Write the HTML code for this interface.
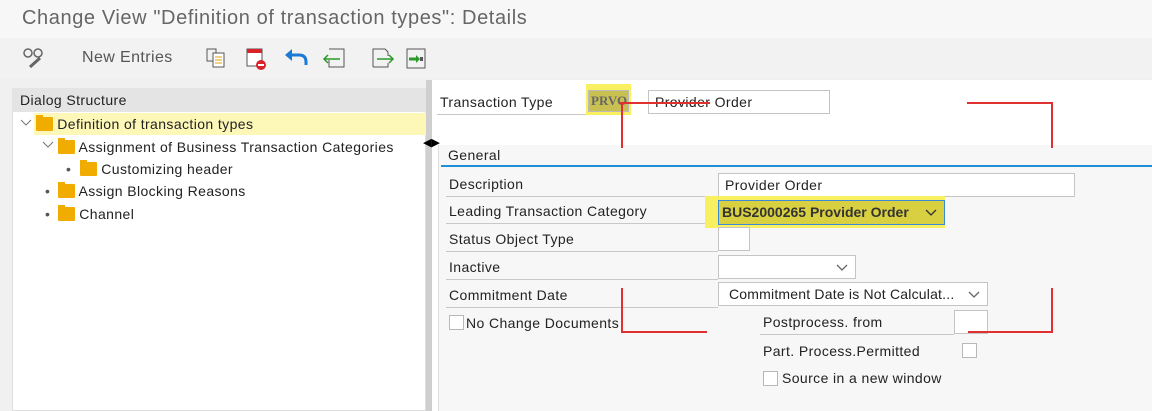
<!DOCTYPE html>
<html><head><style>
*{margin:0;padding:0;box-sizing:border-box}
body{width:1152px;height:411px;position:relative;overflow:hidden;background:#fff;font-family:"Liberation Sans",sans-serif;font-size:14px;color:#222;letter-spacing:0.4px}
.a{position:absolute;white-space:nowrap}
.lbl{position:absolute;border-bottom:1px solid #c8c8c8;height:24px;line-height:22px;padding-left:3px;font-size:14px}
.inp{position:absolute;background:#fff;border:1px solid #c4c4c4;height:24px;line-height:22px;padding-left:6px;font-size:14px}
.cb{position:absolute;width:15px;height:15px;border:1px solid #b8b8b8;background:#fff}
.rl{position:absolute;background:#e03030}
.fold{display:inline-block;width:17px;height:14px;background:#f0ac00;border-radius:1px;vertical-align:-2px;position:relative}
.fold:before{content:"";position:absolute;left:0;top:-2px;width:7px;height:3px;background:#f0ac00}
.chev{position:absolute;right:7px;top:8px;width:12px;height:8px}
</style></head><body>
<div class="a" style="left:0;top:0;width:1152px;height:38px;background:#f7f7f7"></div>
<div class="a" style="left:22px;top:7px;font-size:20px;color:#666;letter-spacing:0.6px">Change View "Definition of transaction types": Details</div>
<div class="a" style="left:0;top:38px;width:1152px;height:40px;background:#f2f2f2"></div>
<svg class="a" style="left:22px;top:45px" width="26" height="26"><circle cx="6" cy="8" r="4" fill="none" stroke="#666" stroke-width="1.5"/><circle cx="16" cy="8" r="4" fill="none" stroke="#666" stroke-width="1.5"/><path d="M8 22 L18 13" stroke="#666" stroke-width="3"/></svg>
<div class="a" style="left:82px;top:49px;font-size:16px;color:#555">New Entries</div>
<svg class="a" style="left:205px;top:46px" width="225" height="26">
<rect x="2" y="3" width="9" height="12" fill="none" stroke="#555"/><rect x="8" y="7" width="11" height="14" fill="#fff" stroke="#555"/><line x1="10" y1="11" x2="17" y2="11" stroke="#e0a000"/><line x1="10" y1="14" x2="17" y2="14" stroke="#e0a000"/><line x1="10" y1="17" x2="17" y2="17" stroke="#e0a000"/>
<rect x="42" y="3" width="15" height="17" fill="#fff" stroke="#555"/><rect x="42" y="3" width="15" height="4" fill="#d8232a"/><circle cx="56" cy="19" r="5" fill="#d8232a"/><line x1="53" y1="19" x2="59" y2="19" stroke="#fff" stroke-width="2"/>
<path d="M85 9 L94 9 Q101 9 101 16 L101 19" fill="none" stroke="#1a7ad4" stroke-width="3"/><path d="M80 9 L87 3 L87 15 Z" fill="#1a7ad4"/>
<path d="M124 3 L139 3 L139 21 L124 21 L124 14" fill="none" stroke="#555"/><path d="M135 13 L119 13 M123 9 L119 13 L123 17" fill="none" stroke="#2a9a2a" stroke-width="1.5"/>
<path d="M168 21 L168 3 L180 3 L183 6 L183 10 M183 17 L183 21 L168 21" fill="none" stroke="#555"/><path d="M172 13 L188 13 M184 9 L188 13 L184 17" fill="none" stroke="#2a9a2a" stroke-width="1.5"/>
<rect x="202" y="3" width="18" height="19" fill="none" stroke="#555"/><path d="M204 13 L212 13" stroke="#2a9a2a" stroke-width="3"/><path d="M211 9 L215 13 L211 17Z" fill="#2a9a2a"/><rect x="215" y="11" width="3" height="4" fill="#555"/>
</svg>
<div class="a" style="left:0;top:78px;width:1152px;height:333px;background:#f0f0f0"></div>
<div class="a" style="left:12px;top:88px;width:414px;height:323px;background:#fff;border:1px solid #ddd"></div>
<div class="a" style="left:12px;top:88px;width:414px;height:24px;background:#e4e4e4"></div>
<div class="a" style="left:20px;top:92px;font-size:14px">Dialog Structure</div>
<div class="a" style="left:426px;top:80px;width:6px;height:331px;background:#cfcfcf"></div>
<div class="a" style="left:34px;top:113px;width:392px;height:22px;background:#fdf7b8"></div>
<svg class="a" style="left:20px;top:119px" width="12" height="8"><path d="M1 1 L6 6 L11 1" fill="none" stroke="#777"/></svg>
<div class="a" style="left:36px;top:116px"><span class="fold"></span> Definition of transaction types</div>
<svg class="a" style="left:42px;top:141px" width="12" height="8"><path d="M1 1 L6 6 L11 1" fill="none" stroke="#777"/></svg>
<div class="a" style="left:58px;top:139px"><span class="fold"></span> Assignment of Business Transaction Categories</div>
<div class="a" style="left:66px;top:161px;color:#555">&#8226;</div>
<div class="a" style="left:80px;top:161px"><span class="fold"></span> Customizing header</div>
<div class="a" style="left:45px;top:183px;color:#555">&#8226;</div>
<div class="a" style="left:58px;top:183px"><span class="fold"></span> Assign Blocking Reasons</div>
<div class="a" style="left:45px;top:206px;color:#555">&#8226;</div>
<div class="a" style="left:58px;top:206px"><span class="fold"></span> Channel</div>
<div class="a" style="left:432px;top:80px;width:720px;height:331px;background:#fff"></div>
<div class="lbl" style="left:437px;top:91px;width:150px">Transaction Type</div>
<div class="a" style="left:586px;top:84px;width:45px;height:31px;background:#f8f060"></div>
<div class="a" style="left:588px;top:90px;width:41px;height:22px;background:#c8c050;border:1px solid #bbb;font-family:'Liberation Serif',serif;font-weight:bold;font-size:13px;line-height:20px;color:#666;padding-left:2px;letter-spacing:0">PRVO</div>
<div class="inp" style="left:648px;top:90px;width:182px">Provider Order</div>
<div class="a" style="left:438px;top:145px;width:714px;height:266px;background:#f7f7f7;border-left:1px solid #ddd"></div>
<div class="a" style="left:448px;top:147px;font-size:14px">General</div>
<div class="a" style="left:441px;top:165px;width:711px;height:2px;background:#1e90d8"></div>
<div class="lbl" style="left:446px;top:173px;width:272px">Description</div>
<div class="inp" style="left:718px;top:173px;width:357px">Provider Order</div>
<div class="lbl" style="left:446px;top:200px;width:272px">Leading Transaction Category</div>
<div class="a" style="left:705px;top:196px;width:240px;height:32px;background:#f8f060"></div>
<div class="a" style="left:718px;top:200px;width:227px;height:25px;background:#d8d040;border:1px solid #3a8ad8;font-weight:bold;line-height:22px;padding-left:3px;color:#333;letter-spacing:0">BUS2000265 Provider Order <svg class="chev" viewBox="0 0 12 8"><path d="M1 1 L6 6 L11 1" fill="none" stroke="#333" stroke-width="1.3"/></svg></div>
<div class="lbl" style="left:446px;top:228px;width:272px">Status Object Type</div>
<div class="inp" style="left:718px;top:227px;width:32px"></div>
<div class="lbl" style="left:446px;top:256px;width:272px">Inactive</div>
<div class="inp" style="left:718px;top:255px;width:138px"><svg class="chev" viewBox="0 0 12 8"><path d="M1 1 L6 6 L11 1" fill="none" stroke="#666" stroke-width="1.3"/></svg></div>
<div class="lbl" style="left:446px;top:284px;width:272px">Commitment Date</div>
<div class="inp" style="left:718px;top:282px;width:270px;padding-left:10px;letter-spacing:0.2px">Commitment Date is Not Calculat... <svg class="chev" viewBox="0 0 12 8"><path d="M1 1 L6 6 L11 1" fill="none" stroke="#666" stroke-width="1.3"/></svg></div>
<div class="cb" style="left:449px;top:315px"></div>
<div class="a" style="left:466px;top:315px">No Change Documents</div>
<div class="lbl" style="left:760px;top:311px;width:194px">Postprocess. from</div>
<div class="inp" style="left:954px;top:310px;width:34px"></div>
<div class="a" style="left:763px;top:343px">Part. Process.Permitted</div>
<div class="cb" style="left:962px;top:343px"></div>
<div class="cb" style="left:763px;top:371px"></div>
<div class="a" style="left:782px;top:370px">Source in a new window</div>
<div class="rl" style="left:620px;top:102px;width:90px;height:2px"></div>
<div class="rl" style="left:621px;top:102px;width:2px;height:46px"></div>
<div class="rl" style="left:967px;top:102px;width:86px;height:2px"></div>
<div class="rl" style="left:1051px;top:102px;width:2px;height:46px"></div>
<div class="rl" style="left:621px;top:288px;width:2px;height:45px"></div>
<div class="rl" style="left:621px;top:331px;width:86px;height:2px"></div>
<div class="rl" style="left:1051px;top:288px;width:2px;height:45px"></div>
<div class="rl" style="left:968px;top:331px;width:85px;height:2px"></div>
<div class="a" style="left:423px;top:136px;font-size:11px;color:#000;letter-spacing:0">&#9664;&#9654;</div>
</body></html>
